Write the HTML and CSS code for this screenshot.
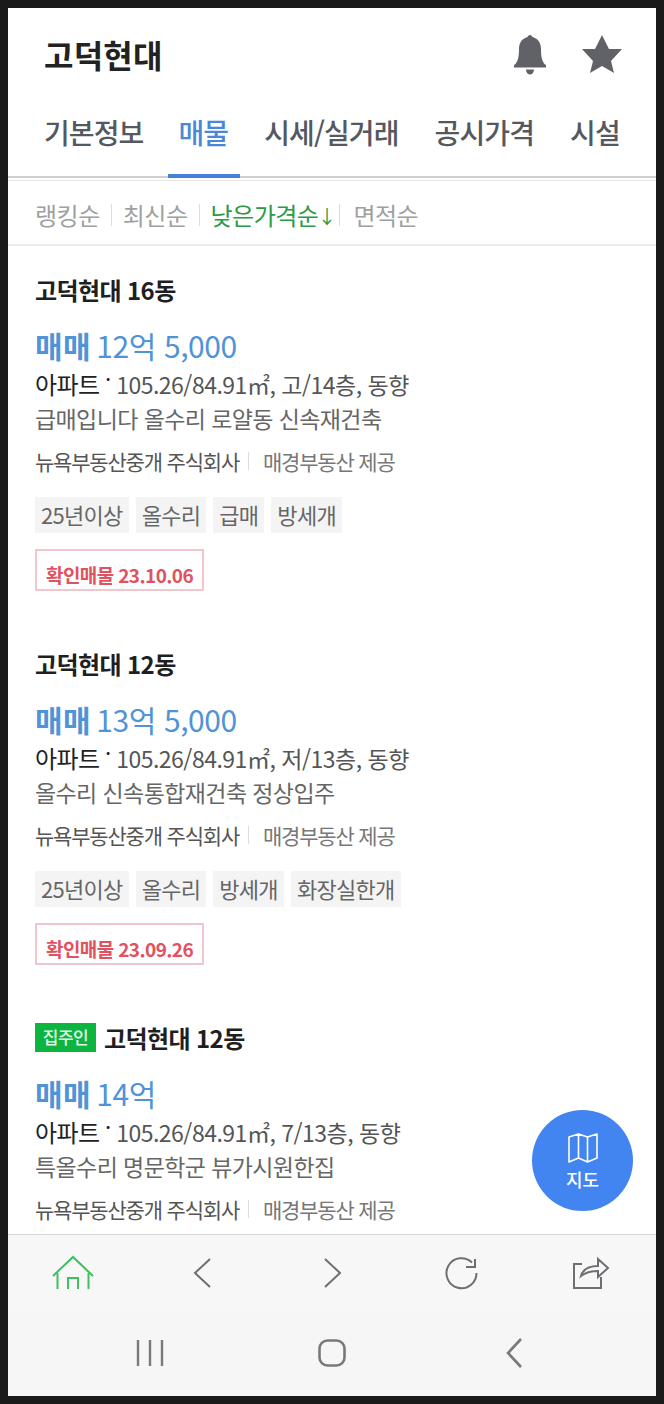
FILE: index.html
```html
<!DOCTYPE html>
<html lang="ko">
<head>
  <title>고덕현대 - 매물</title>
  <meta charset="utf-8">
  <meta name="viewport" content="width=device-width, initial-scale=1.0">
  <link rel="stylesheet" href="styles.css">
</head>
<body>
  <div class="phone">
    <div class="header">
      <h1>고덕현대</h1>
      <div class="header-icons">
        <svg width="32" height="40" viewBox="0 0 32 40" fill="#606267"><path d="M16 0c1.500 0 2 1 2.500 2C24 3.500 27 8 27 14c0 8 1 12 4 15.500l1 .5v2.500H0V30l1-.5C4 26 5 22 5 14 5 8 8 3.500 13.500 2 14 1 14.500 0 16 0z"/><path d="M12 34.500h8c0 3-2 5-4 5s-4-2-4-5z"/></svg>
        <svg width="40" height="38" viewBox="0 0 40 38" fill="#606267"><path d="M20 0l7 14h13L29 26l3 12-12-7-12 7 3-12L0 14h13z"/></svg>
      </div>
    </div>

    <div class="tabs">
      <div class="tab">기본정보</div>
      <div class="tab active">매물</div>
      <div class="tab">시세/실거래</div>
      <div class="tab">공시가격</div>
      <div class="tab">시설</div>
    </div>

    <div class="sort">
      <span>랭킹순</span>
      <i></i>
      <span>최신순</span>
      <i></i>
      <span class="on">낮은가격순<span class="arrow">↓</span></span>
      <i class="tight"></i>
      <span>면적순</span>
    </div>

    <div class="list">
      <div class="item">
        <div class="item-title">고덕현대 16동</div>
        <div class="price"><b>매매</b>12억 5,000</div>
        <div class="spec"><em>아파트 <u>·</u></em> 105.26/84.91㎡, 고/14층, 동향</div>
        <div class="desc">급매입니다 올수리 로얄동 신속재건축</div>
        <div class="agent"><span>뉴욕부동산중개 주식회사</span><i></i><span class="src">매경부동산 제공</span></div>
        <div class="tags"><span>25년이상</span><span>올수리</span><span>급매</span><span>방세개</span></div>
        <div class="confirm">확인매물 23.10.06</div>
      </div>

      <div class="item">
        <div class="item-title">고덕현대 12동</div>
        <div class="price"><b>매매</b>13억 5,000</div>
        <div class="spec"><em>아파트 <u>·</u></em> 105.26/84.91㎡, 저/13층, 동향</div>
        <div class="desc">올수리 신속통합재건축 정상입주</div>
        <div class="agent"><span>뉴욕부동산중개 주식회사</span><i></i><span class="src">매경부동산 제공</span></div>
        <div class="tags"><span>25년이상</span><span>올수리</span><span>방세개</span><span>화장실한개</span></div>
        <div class="confirm">확인매물 23.09.26</div>
      </div>

      <div class="item">
        <div class="item-title"><span class="owner">집주인</span>고덕현대 12동</div>
        <div class="price"><b>매매</b>14억</div>
        <div class="spec"><em>아파트 <u>·</u></em> 105.26/84.91㎡, 7/13층, 동향</div>
        <div class="desc">특올수리 명문학군 뷰가시원한집</div>
        <div class="agent"><span>뉴욕부동산중개 주식회사</span><i></i><span class="src">매경부동산 제공</span></div>
      </div>
    </div>

    <div class="map-btn">
      <svg width="30" height="30" viewBox="0 0 30 30" fill="none" stroke="#fff" stroke-width="1.600" stroke-linejoin="round"><path d="M1 4l9.500-3 9 3L29 1v24l-9.500 4-9-4L1 29zM10.500 1v24M19.500 4v25"/></svg>
      <span>지도</span>
    </div>

    <div class="toolbar">
      <svg width="42" height="36" viewBox="0 0 42 36" fill="none" stroke="#3cc060" stroke-width="2"><path d="M1 21L21 2l20 19"/><path d="M5.500 18v16M36.500 18v16M16 34V23h10v11"/></svg>
      <svg width="18" height="32" viewBox="0 0 18 32" fill="none" stroke="#6e6f72" stroke-width="2"><path d="M17 2L2 16l15 14"/></svg>
      <svg class="next" width="18" height="32" viewBox="0 0 18 32" fill="none" stroke="#6e6f72" stroke-width="2"><path d="M1 2l15 14L1 30"/></svg>
      <svg width="34" height="34" viewBox="0 0 34 34" fill="none" stroke="#6e6f72" stroke-width="2"><path d="M31.500 17A15 15 0 1 1 27 6.500"/><path d="M21 11h9V3"/></svg>
      <svg width="38" height="32" viewBox="0 0 38 32" fill="none" stroke="#6e6f72" stroke-width="2"><path d="M10 7H2v24h27V20"/><path d="M9 19c2-7 9-10 17-10V2l10 9-10 9v-6c-7 0-12 1-17 5z"/></svg>
    </div>

    <div class="navbar">
      <svg width="28" height="28" viewBox="0 0 28 28" stroke="#77797c" stroke-width="2.400"><path d="M2 1v26M14 1v26M26 1v26"/></svg>
      <svg width="28" height="28" viewBox="0 0 28 28" fill="none" stroke="#77797c" stroke-width="2.600"><rect x="1.500" y="1.500" width="25" height="25" rx="8"/></svg>
      <svg width="18" height="30" viewBox="0 0 18 30" fill="none" stroke="#77797c" stroke-width="2.600"><path d="M16 1L3 15l13 14"/></svg>
    </div>
  </div>
</body>
</html>
```

FILE: styles.css
```css
* {
  margin: 0;
  padding: 0;
  box-sizing: border-box;
}

html, body {
  height: 100%;
  overflow: hidden;
}

body {
  background: #1a1a1a;
  padding: 8px;
  font-family: 'Noto Sans CJK KR', 'Noto Sans', sans-serif;
  color: #222;
}

.phone {
  position: relative;
  height: 1388px;
  background: white;
  display: flex;
  flex-direction: column;
  overflow: hidden;
}

.header {
  height: 90px;
  padding: 0 34px 0 36px;
  display: flex;
  align-items: center;
  justify-content: space-between;
  flex-shrink: 0;
}

.header h1 {
  font-size: 32px;
  font-weight: 700;
  color: #222;
  letter-spacing: 0.2px;
  margin-top: 2px;
}

.header-icons {
  display: flex;
  align-items: flex-start;
  gap: 36px;
  margin-top: 4px;
}

.tabs {
  height: 80px;
  padding-left: 36px;
  display: flex;
  gap: 36px;
  flex-shrink: 0;
  border-bottom: 2px solid #cfd0d2;
}

.tab {
  height: 80px;
  padding-top: 14px;
  font-size: 28px;
  font-weight: 500;
  color: #55585e;
  letter-spacing: -0.9px;
  white-space: nowrap;
}

.tab.active {
  color: #4a86dc;
  border-bottom: 4px solid #4a7fd8;
  margin: 0 -12px 0 -11px;
  padding-left: 10px;
  padding-right: 12px;
}

.sort {
  height: 66px;
  margin-top: 2px;
  padding: 4px 0 0 27px;
  display: flex;
  align-items: center;
  border-top: 1px solid #e6e6e6;
  border-bottom: 2px solid #ececec;
  flex-shrink: 0;
  font-size: 24px;
  color: #a0a0a0;
  letter-spacing: -0.5px;
}

.sort i {
  width: 1px;
  height: 22px;
  margin: 0 11px;
  background: #dcdcdc;
}

.sort i.tight {
  margin: 0 13px 0 3px;
}

.sort .on {
  color: #2a9a45;
}

.sort .arrow {
  font-size: 19px;
  letter-spacing: 0;
  margin-left: -1px;
  vertical-align: 1px;
}

.list {
  flex: 1;
  overflow: hidden;
  padding: 0 27px;
}

.item {
  height: 374px;
  padding-top: 24px;
}

.item-title {
  display: flex;
  align-items: center;
  gap: 8px;
  height: 38px;
  font-size: 24px;
  font-weight: 700;
  color: #1f1f1f;
  letter-spacing: -0.6px;
}

.owner {
  background: #0cb53f;
  color: #e6f7ea;
  font-size: 17px;
  font-weight: 500;
  width: 61px;
  height: 29px;
  line-height: 27px;
  text-align: center;
  letter-spacing: -0.5px;
}

.price {
  margin-top: 16px;
  font-size: 30px;
  line-height: 42px;
  color: #4f93d8;
  letter-spacing: -0.4px;
}

.price b {
  font-weight: 700;
  letter-spacing: 0.5px;
  margin-right: 5px;
}

.spec {
  height: 34px;
  font-size: 23px;
  line-height: 34px;
  margin-top: 1px;
  color: #555;
  letter-spacing: -0.5px;
}

.spec em {
  font-style: normal;
  font-size: 24px;
  line-height: 1;
  letter-spacing: -0.6px;
  color: #222;
}

.spec u {
  text-decoration: none;
  font-size: 16px;
  font-weight: 700;
  vertical-align: 8px;
}

.desc {
  font-size: 23px;
  line-height: 33px;
  margin-top: 1px;
  color: #666;
  letter-spacing: -0.6px;
}

.agent {
  margin-top: 9px;
  display: flex;
  align-items: center;
  height: 34px;
  font-size: 21px;
  color: #555;
  letter-spacing: -1.2px;
}

.agent i {
  width: 1px;
  height: 18px;
  margin: 0 14px 0 9px;
  background: #dcdcdc;
}

.agent .src {
  color: #777;
}

.tags {
  margin-top: 19px;
  display: flex;
  gap: 7px;
}

.tags span {
  height: 36px;
  line-height: 35px;
  padding: 0 6px;
  background: #f4f4f4;
  font-size: 22px;
  color: #666;
  letter-spacing: -0.7px;
}

.confirm {
  display: inline-block;
  margin-top: 16px;
  height: 42px;
  padding: 0 9px;
  line-height: 47px;
  border: 2px solid #f3c6cd;
  font-size: 19px;
  font-weight: 700;
  color: #e0525f;
  letter-spacing: -0.6px;
}

.map-btn {
  position: absolute;
  left: 524px;
  top: 1102px;
  width: 101px;
  height: 101px;
  border-radius: 50%;
  background: #4285f0;
  color: white;
  display: flex;
  flex-direction: column;
  align-items: center;
  padding-top: 23px;
  gap: 6px;
  font-size: 18px;
  line-height: 20px;
  font-weight: 500;
}

.toolbar {
  height: 76px;
  flex-shrink: 0;
  background: #f7f7f7;
  border-top: 1px solid #d5d7d9;
  display: grid;
  grid-template-columns: repeat(5, 1fr);
  align-items: center;
  justify-items: center;
}

.toolbar .next {
  margin-left: 2px;
}

.navbar {
  height: 86px;
  flex-shrink: 0;
  background: #f6f6f6;
  display: grid;
  grid-template-columns: repeat(3, 182px);
  justify-content: center;
  align-items: center;
  justify-items: center;
}
```
